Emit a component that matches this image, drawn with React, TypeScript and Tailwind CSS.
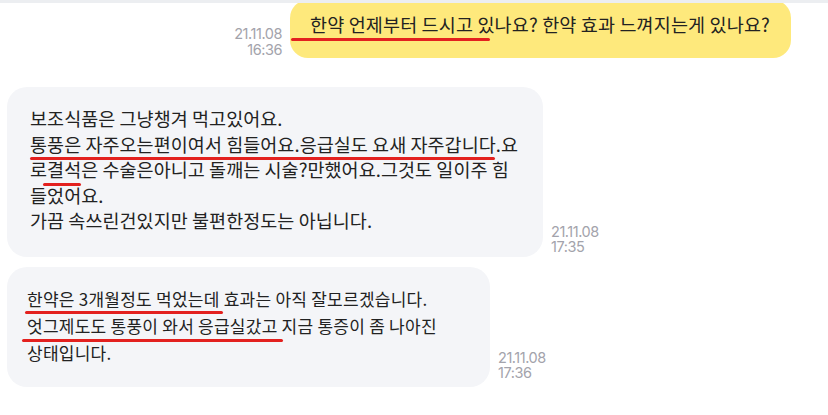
const kr = { fontFamily: '"Noto Sans CJK KR", "Noto Sans", sans-serif' }
const ts = { fontFamily: 'Inter, "Liberation Sans", sans-serif' }

function Mark({ left, width, top }: { left: number; width: number; top: number }) {
  return (
    <span
      className="absolute h-[3px] rounded-full bg-[#e3211f]"
      style={{ left, width, top }}
    />
  )
}

function Stamp({ date, time, right }: { date: string; time: string; right?: boolean }) {
  return (
    <div
      className={`text-[14.5px] leading-[15.5px] tracking-[-0.45px] text-[#a3a3ab] ${right ? "text-right" : "text-left"}`}
      style={ts}
    >
      <div>{date}</div>
      <div>{time}</div>
    </div>
  )
}

export default function App() {
  return (
    <div className="w-[828px] h-[415px] overflow-hidden bg-white border-t-[3px] border-[#eceef1] text-[#222222]" style={kr}>
      {/* outgoing */}
      <div className="-mt-[3px] flex items-end justify-end gap-[8px] pr-[37px]">
        <div className="pb-[1px]">
          <Stamp date="21.11.08" time="16:36" right />
        </div>
        <div className="relative rounded-[18px] bg-[#fee97c] pl-[20px] pr-[21px] pt-[12px] pb-[21px] text-[18.5px] leading-[25px] tracking-[0.15px] whitespace-nowrap">
          한약 언제부터 드시고 있나요? 한약 효과 느껴지는게 있나요?
          <Mark left={1} width={199} top={38} />
        </div>
      </div>

      {/* incoming 1 */}
      <div className="mt-[29px] flex items-end gap-[8px] pl-[7px]">
        <div className="w-[536px] rounded-[20px] bg-[#f4f5f8] pl-[23px] pt-[19px] pb-[23px] text-[18.5px] leading-[25.5px] tracking-[0.05px] whitespace-nowrap">
          <div>보조식품은 그냥챙겨 먹고있어요.</div>
          <div className="relative">
            통풍은 자주오는편이여서 힘들어요.응급실도 요새 자주갑니다.요
            <Mark left={0} width={465} top={25} />
          </div>
          <div className="relative">
            로결석은 수술은아니고 돌깨는 시술?만했어요.그것도 일이주 힘
            <Mark left={13} width={38} top={25.5} />
          </div>
          <div>들었어요.</div>
          <div>가끔 속쓰린건있지만 불편한정도는 아닙니다.</div>
        </div>
        <div className="pb-[2px]">
          <Stamp date="21.11.08" time="17:35" />
        </div>
      </div>

      {/* incoming 2 */}
      <div className="mt-[10px] flex items-end gap-[8px] pl-[7px]">
        <div className="w-[483px] rounded-[20px] bg-[#f4f5f8] pl-[20px] pt-[18px] pb-[21px] text-[17px] leading-[27px] tracking-[0.25px] whitespace-nowrap">
          <div className="relative">
            한약은 3개월정도 먹었는데 효과는 아직 잘모르겠습니다.
            <Mark left={-2} width={198} top={26} />
          </div>
          <div className="relative">
            엇그제도도 통풍이 와서 응급실갔고 지금 통증이 좀 나아진
            <Mark left={-5} width={261} top={27} />
          </div>
          <div>상태입니다.</div>
        </div>
        <div className="pb-[6px]">
          <Stamp date="21.11.08" time="17:36" />
        </div>
      </div>
    </div>
  )
}
